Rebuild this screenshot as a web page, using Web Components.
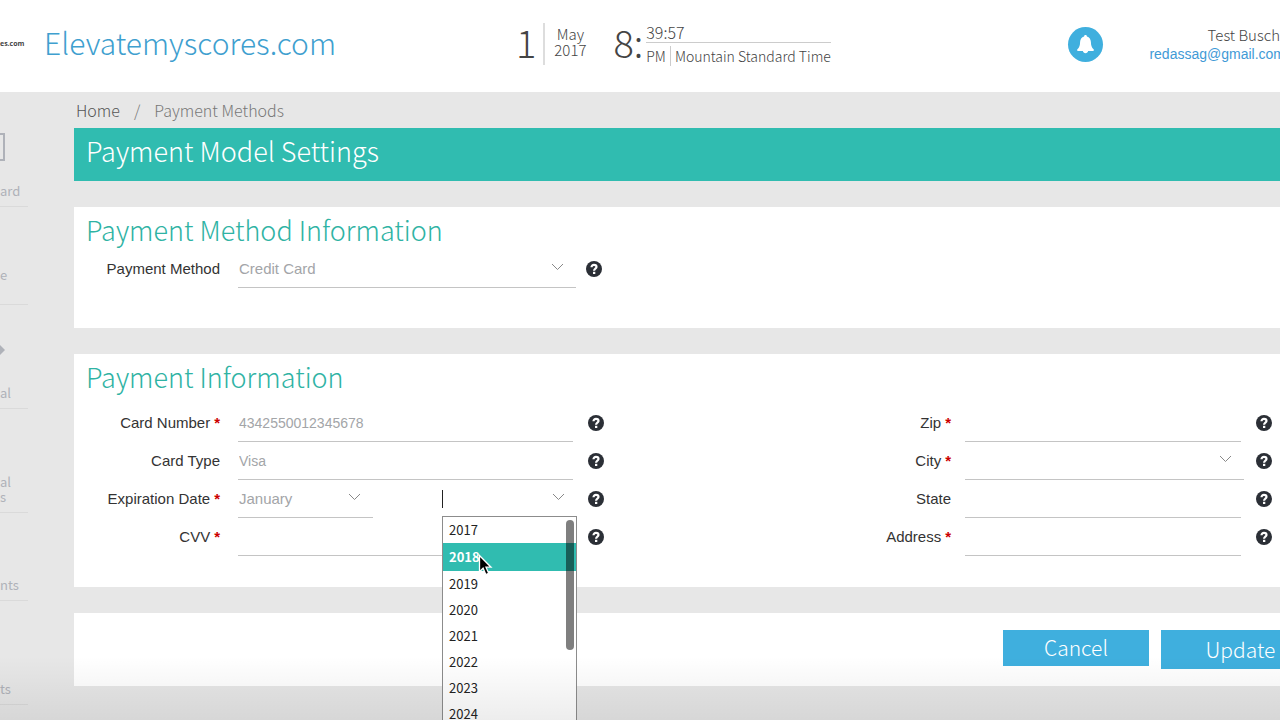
<!DOCTYPE html>
<html lang="en">
<head>
<meta charset="utf-8">
<title>Payment Methods</title>
<style>
    html, body {
        height: 100%;
        margin: 0;
    }

    body {
        --light: "Noto Sans CJK SC", "Open Sans", sans-serif;
        --plain: "Liberation Sans", Arial, sans-serif;
        --teal: #30bcb0;
        --blue: #3fafde;
        background: #e7e7e7;
        color: #333;
        font: 15px/20px var(--plain);
        overflow: hidden;
    }
</style>
</head>

<body>
    <payment-app></payment-app>
</body>

<template id="payment-app">
    <style>
        :host {
            display: block;
            min-height: 100%;
        }

        .body {
            display: flex;
        }

        side-nav {
            flex: 0 0 28px;
        }

        /* the panels run past the right edge of the window */
        main {
            flex: 1;
            display: flex;
            flex-direction: column;
            gap: 26px;
            margin: 0 -40px 0 46px;
        }

        .columns {
            display: flex;
            justify-content: space-between;
            padding-right: 48px;
        }

        .right {
            --label-width: 100px;
            --label-gap: 14px;
            --control-width: 276px;
        }

        .actions {
            display: flex;
            align-items: flex-start;
            justify-content: flex-end;
            gap: 12px;
            padding-top: 12px;
        }

        .shade {
            position: absolute;
            inset: auto 0 0 0;
            height: 64px;
            z-index: 5;
            pointer-events: none;
            background: linear-gradient(rgba(0, 0, 0, 0), rgba(0, 0, 0, .07));
        }
    </style>
    <app-header></app-header>
    <div class="body">
        <side-nav></side-nav>
        <main>
            <page-title>Payment Model Settings</page-title>
            <info-panel heading="Payment Method Information" style="--bottom: 40px">
                <form-field label="Payment Method" kind="select" value="Credit Card" style="--help-gap: 10px"></form-field>
            </info-panel>
            <info-panel heading="Payment Information" style="--title-gap: 9px; --bottom: 31px">
                <div class="columns">
                    <div>
                        <form-field label="Card Number" required value="4342550012345678"></form-field>
                        <form-field label="Card Type" value="Visa"></form-field>
                        <form-field label="Expiration Date" required kind="expiry" value="January"></form-field>
                        <form-field label="CVV" required></form-field>
                    </div>
                    <div class="right">
                        <form-field label="Zip" required></form-field>
                        <form-field label="City" required kind="select" style="--help-gap: 12px"></form-field>
                        <form-field label="State"></form-field>
                        <form-field label="Address" required></form-field>
                    </div>
                </div>
            </info-panel>
            <info-panel style="--bottom: 17px">
                <div class="actions">
                    <action-button>Cancel</action-button>
                    <action-button large>Update</action-button>
                </div>
            </info-panel>
        </main>
    </div>
    <div class="shade"></div>
</template>

<template id="app-header">
    <style>
        :host {
            display: flex;
            align-items: center;
            box-sizing: border-box;
            height: 92px;
            padding-bottom: 4px;
            background: #fff;
            font-family: var(--light);
            font-weight: 300;
            color: #444;
            white-space: nowrap;
        }

        .logo {
            flex: 0 0 44px;
            font: bold 7px/12px "Open Sans", sans-serif;
            color: #444;
        }

        .brand {
            flex: 0 0 472px;
            padding-bottom: 4px;
            font-size: 30px;
            line-height: 40px;
            color: #3f9fcf;
            text-decoration: none;
        }

        .date, .time {
            display: flex;
            align-items: center;
        }

        .big {
            padding-bottom: 4px;
            font-size: 38px;
            line-height: 42px;
        }

        .month {
            margin-left: 7px;
            padding: 3px 0 7px 9px;
            border-left: 2px solid #ddd;
            text-align: center;
            font-size: 15px;
            line-height: 16px;
        }

        .time {
            margin-left: 27px;
        }

        .detail {
            margin-left: 3px;
            font-size: 14px;
            line-height: 20px;
        }

        .detail div:first-child {
            border-bottom: 1px solid #ccc;
            font-size: 16px;
        }

        .detail div:last-child {
            padding-top: 3px;
        }

        .detail i {
            margin: 0 4px;
            border-left: 1px solid #ccc;
        }

        button {
            width: 35px;
            height: 35px;
            margin-left: auto;
            padding: 0;
            border: 0;
            border-radius: 50%;
            background: var(--blue);
        }

        svg {
            display: block;
            margin: auto;
        }

        .user {
            margin: 0 -5px 0 46px;
            text-align: right;
            font-size: 15px;
            line-height: 18px;
        }

        .user div {
            padding-right: 5px;
        }

        .user a {
            font: 14px/18px var(--plain);
            color: #3f9ad6;
            text-decoration: none;
        }
    </style>
    <span class="logo">es.com</span>
    <a class="brand" href="#">Elevatemyscores.com</a>
    <div class="date">
        <span class="big">1</span>
        <div class="month">May<br>2017</div>
    </div>
    <div class="time">
        <span class="big">8:</span>
        <div class="detail">
            <div>39:57</div>
            <div>PM<i></i>Mountain Standard Time</div>
        </div>
    </div>
    <button aria-label="Notifications">
        <svg width="17" height="19" viewBox="0 0 17 19" fill="#fff">
            <path d="M8.500 0c-.9 0-1.400.6-1.400 1.400C4.500 2 3.200 4.200 3.100 7c-.1 3.500-.8 5.700-2.700 7.300-.5.700-.2 1.700.7 1.700h4.800c.3 1.400 1.200 2.200 2.600 2.200s2.300-.8 2.600-2.200h4.800c.9 0 1.200-1 .7-1.700-1.900-1.600-2.600-3.800-2.700-7.300-.1-2.800-1.400-5-4-5.600C9.900.6 9.400 0 8.500 0z"/>
        </svg>
    </button>
    <div class="user">
        <div>Test Busch</div>
        <a href="mailto:redassag@gmail.com">redassag@gmail.com</a>
    </div>
</template>

<template id="side-nav">
    <style>
        :host {
            display: block;
            font: 13px/15px var(--light);
        }

        a {
            display: flex;
            flex-direction: column;
            justify-content: flex-end;
            box-sizing: border-box;
            height: 104px;
            padding-bottom: 8px;
            border-bottom: 1px solid #dadada;
            color: #afb2b9;
            text-decoration: none;
        }

        a.first {
            height: 115px;
        }

        a.short {
            height: 88px;
        }

        a.raised {
            height: 98px;
            padding-bottom: 22px;
        }

        svg {
            display: block;
            margin-bottom: 22px;
        }

        svg.arrow {
            margin-bottom: 30px;
        }
    </style>
    <nav>
        <a class="first" href="#">
            <svg width="6" height="28" viewBox="0 0 6 28" fill="none" stroke="#afb2b9" stroke-width="2">
                <path d="M0 1h4v26H0"/>
            </svg>
            ard
        </a>
        <a class="raised" href="#">e</a>
        <a href="#">
            <svg class="arrow" width="6" height="10" viewBox="0 0 6 10" fill="#afb2b9">
                <path d="M0 0l5 5-5 5z"/>
            </svg>
            al
        </a>
        <a href="#">al<br>s</a>
        <a class="short" href="#">nts</a>
        <a href="#">ts</a>
    </nav>
</template>

<template id="page-title">
    <style>
        :host {
            display: block;
            font-family: var(--light);
            font-weight: 300;
        }

        nav {
            display: flex;
            gap: 14px;
            height: 36px;
            padding-left: 2px;
            font-size: 16px;
            line-height: 36px;
            color: #777;
        }

        a {
            color: #555;
            text-decoration: none;
        }

        h1 {
            margin: 0;
            padding: 4px 12px 11px;
            background: var(--teal);
            color: #fff;
            font-size: 27px;
            line-height: 38px;
            font-weight: 300;
        }
    </style>
    <nav aria-label="Breadcrumb">
        <a href="#">Home</a>
        <span>/</span>
        <span>Payment Methods</span>
    </nav>
    <h1><slot></slot></h1>
</template>

<template id="info-panel">
    <style>
        :host {
            display: block;
            padding: 5px 0 var(--bottom, 30px) 12px;
            background: #fff;
        }

        h2 {
            margin: 0 0 var(--title-gap, 2px);
            color: #2fb3a4;
            font: 300 27px/36px var(--light);
        }

        h2:empty {
            display: none;
        }
    </style>
    <h2></h2>
    <slot></slot>
</template>

<template id="form-field">
    <style>
        :host {
            display: flex;
            align-items: center;
            height: 38px;
        }

        .label {
            flex: 0 0 var(--label-width, 134px);
            margin-right: var(--label-gap, 18px);
            text-align: right;
            white-space: nowrap;
        }

        .label b {
            margin-left: 4px;
            color: #c00;
        }

        .control {
            display: flex;
            justify-content: space-between;
            width: var(--control-width, 335px);
            height: 38px;
        }

        :host([kind="select"]) .control {
            width: calc(var(--control-width, 335px) + 3px);
        }

        .box {
            position: relative;
            flex: 1;
        }

        .expiry .box {
            flex: 0 0 135px;
        }

        .expiry .box + .box {
            margin-right: -4px;
        }

        input, select {
            box-sizing: border-box;
            width: 100%;
            height: 38px;
            margin: 0;
            padding: 0 1px;
            border: 0;
            border-bottom: 1px solid #c4c4c4;
            border-radius: 0;
            outline: 0;
            background: none;
            appearance: none;
            color: #a3a5a8;
            font: 14px/20px var(--plain);
        }

        select {
            font-size: 15px;
        }

        .chevron {
            position: absolute;
            right: 12px;
            top: 13px;
            pointer-events: none;
        }

        .caret {
            position: absolute;
            left: 0;
            top: 10px;
            width: 1px;
            height: 18px;
            background: #222;
        }

        .help {
            flex: 0 0 16px;
            width: 16px;
            height: 16px;
            margin-left: var(--help-gap, 15px);
            padding: 0;
            border: 0;
            border-radius: 50%;
            background: #2b2f36;
        }

        .help svg {
            display: block;
        }
    </style>
    <label class="label" for="control"></label>
    <div class="control"></div>
    <button class="help" aria-label="Help">
        <svg width="16" height="16" viewBox="0 0 16 16" fill="none" stroke="#fff" stroke-width="2.200">
            <path d="M5.500 6.300C5.500 4.600 6.600 3.900 8 3.900s2.500.8 2.500 2.100C10.500 7.700 8.100 7.700 8.100 9.700"/>
            <path d="M7 11.900h2.300"/>
        </svg>
    </button>
</template>

<template id="year-list">
    <style>
        :host {
            position: absolute;
            left: 0;
            right: 0;
            top: 36px;
            z-index: 2;
            border: 1px solid #8c8c8c;
            background: #fff;
        }

        ul {
            margin: 0;
            padding: 0;
            list-style: none;
            color: #222;
            font: 13px/26px var(--light);
        }

        li {
            padding-left: 6px;
        }

        .active {
            background: var(--teal);
            color: #fff;
            font-weight: bold;
            line-height: 28px;
        }

        .thumb {
            position: absolute;
            right: 2px;
            top: 3px;
            width: 8px;
            height: 130px;
            border-radius: 4px;
            background: rgba(0, 0, 0, .5);
        }

        .pointer {
            position: absolute;
            left: 35px;
            top: 37px;
        }
    </style>
    <ul role="listbox" aria-label="Expiration year"></ul>
    <div class="thumb"></div>
    <svg class="pointer" width="15" height="23" viewBox="0 0 15 23">
        <path d="M1.500 1.500v16.200l3.600-3.500 2.700 6.300 2.900-1.200L8 13.200h5z" fill="#000" stroke="#fff" stroke-width="1.300"/>
    </svg>
</template>

<template id="action-button">
    <style>
        :host {
            display: block;
        }

        button {
            display: block;
            width: 146px;
            height: 36px;
            padding: 0 0 2px;
            border: 0;
            background: var(--blue);
            color: #fff;
            font: 300 21px/32px var(--light);
        }

        :host([large]) button {
            width: 159px;
            height: 39px;
        }
    </style>
    <button><slot></slot></button>
</template>

<script>
    class BaseElement extends HTMLElement {
        constructor() {
            super();
            const template = document.getElementById(this.localName);
            const root = this.attachShadow({ mode: 'open' });
            root.appendChild(document.importNode(template.content, true));
        }
    }

    const CHEVRON = `
        <svg class="chevron" width="13" height="8" viewBox="0 0 13 8" fill="none" stroke="#888">
            <path d="M1 1l5.500 5.500L12 1"/>
        </svg>`;

    customElements.define('app-header', class extends BaseElement {});
    customElements.define('side-nav', class extends BaseElement {});
    customElements.define('page-title', class extends BaseElement {});
    customElements.define('action-button', class extends BaseElement {});

    customElements.define('info-panel', class extends BaseElement {
        connectedCallback() {
            this.shadowRoot.querySelector('h2').textContent = this.getAttribute('heading') || '';
        }
    });

    customElements.define('year-list', class extends BaseElement {
        connectedCallback() {
            const list = this.shadowRoot.querySelector('ul');
            for (let year = 2017; year <= 2024; year++) {
                const item = document.createElement('li');
                item.setAttribute('role', 'option');
                item.textContent = year;
                item.classList.toggle('active', year === 2018);
                list.appendChild(item);
            }
        }
    });

    customElements.define('form-field', class extends BaseElement {
        connectedCallback() {
            const label = this.shadowRoot.querySelector('label');
            label.innerHTML = this.getAttribute('label') + (this.hasAttribute('required') ? '<b>*</b>' : '');

            const control = this.shadowRoot.querySelector('.control');
            const kind = this.getAttribute('kind') || 'text';
            control.classList.add(kind);
            control.innerHTML = this[kind](this.getAttribute('value') || '');
        }

        text(value) {
            return `<div class="box"><input id="control" type="text" value="${value}"></div>`;
        }

        select(value) {
            return `<div class="box"><select id="control"><option>${value}</option></select>${CHEVRON}</div>`;
        }

        expiry(value) {
            return `${this.select(value)}
                <div class="box">
                    <input type="text" role="combobox" aria-label="Expiration year" aria-expanded="true">
                    <span class="caret"></span>
                    ${CHEVRON}
                    <year-list></year-list>
                </div>`;
        }
    });

    customElements.define('payment-app', class extends BaseElement {});
</script>

</html>
